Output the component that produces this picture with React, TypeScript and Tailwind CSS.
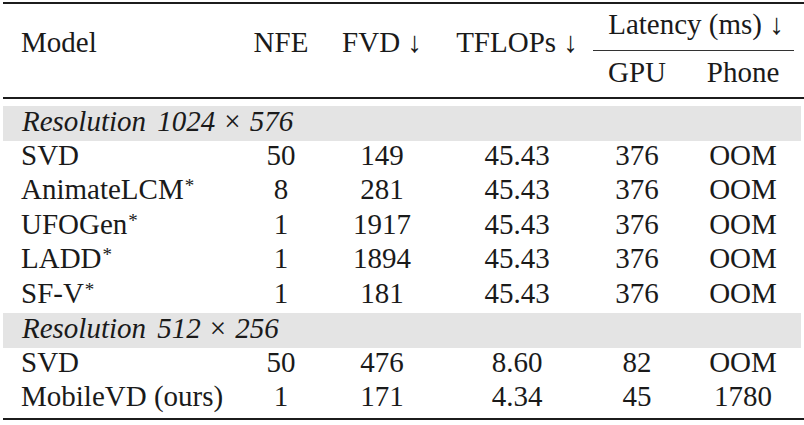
import React from "react";

const cols = "grid grid-cols-[247px_62px_140px_130px_110px_102px]";

function Star() {
  return <span className="inline-block align-top mt-[1px] ml-[1px] text-[19px] leading-[19px]">*</span>;
}

type Row = { name: React.ReactNode; nfe: string; fvd: string; tf: string; gpu: string; phone: string };

const rows1: Row[] = [
  { name: "SVD", nfe: "50", fvd: "149", tf: "45.43", gpu: "376", phone: "OOM" },
  { name: <>AnimateLCM<Star /></>, nfe: "8", fvd: "281", tf: "45.43", gpu: "376", phone: "OOM" },
  { name: <>UFOGen<Star /></>, nfe: "1", fvd: "1917", tf: "45.43", gpu: "376", phone: "OOM" },
  { name: <>LADD<Star /></>, nfe: "1", fvd: "1894", tf: "45.43", gpu: "376", phone: "OOM" },
  { name: <>SF-V<Star /></>, nfe: "1", fvd: "181", tf: "45.43", gpu: "376", phone: "OOM" },
];

const rows2: Row[] = [
  { name: "SVD", nfe: "50", fvd: "476", tf: "8.60", gpu: "82", phone: "OOM" },
  { name: "MobileVD (ours)", nfe: "1", fvd: "171", tf: "4.34", gpu: "45", phone: "1780" },
];

function DataRow({ r }: { r: Row }) {
  return (
    <div className={`${cols} h-[34.4px] leading-[28.5px]`}>
      <div className="pl-[18px] whitespace-nowrap">{r.name}</div>
      <div className="text-center">{r.nfe}</div>
      <div className="text-center">{r.fvd}</div>
      <div className="text-center">{r.tf}</div>
      <div className="text-center">{r.gpu}</div>
      <div className="text-center">{r.phone}</div>
    </div>
  );
}

function Band({ a, b }: { a: string; b: string }) {
  return (
    <div className="h-[35px] mr-[3px] bg-[#e4e4e4] leading-[30px] pl-[19px] italic whitespace-nowrap">
      Resolution <span className="ml-[4px]">{a}</span>
      <span className="not-italic mx-[9px]">×</span>
      {b}
    </div>
  );
}

export default function App() {
  return (
    <div className="w-[804px] h-[425px] bg-white text-[#1a1a1a] text-[29px] overflow-hidden font-['Liberation_Serif','Tinos','Times_New_Roman','DejaVu_Serif',serif]">
      <div className="pt-[2px] pl-[3px]">
        <div className="border-t-2 border-[#1c1c1c]" />
        <div className={`${cols} h-[93px]`}>
          <div className="pl-[18px] pt-[23px] leading-[31px]">Model</div>
          <div className="text-center pt-[23px] leading-[31px]">NFE</div>
          <div className="text-center pt-[23px] leading-[31px]">FVD ↓</div>
          <div className="text-center pt-[23px] leading-[31px]">TFLOPs ↓</div>
          <div className="col-span-2 flex flex-col">
            <div className="text-center pt-[5px] leading-[31px] pl-[16px]">Latency (ms) ↓</div>
            <div className="mt-[10px] ml-[11px] border-t border-[#333]" />
            <div className="grid grid-cols-[110px_102px] pt-[6px] leading-[31px]">
              <div className="text-center">GPU</div>
              <div className="text-center">Phone</div>
            </div>
          </div>
        </div>
        <div className="border-t-2 border-[#1c1c1c]" />
        <div className="h-[7px]" />
        <Band a="1024" b="576" />
        {rows1.map((r, i) => (
          <DataRow key={i} r={r} />
        ))}
        <Band a="512" b="256" />
        {rows2.map((r, i) => (
          <DataRow key={i} r={r} />
        ))}
        <div className="h-[1px]" />
        <div className="border-t-2 border-[#1c1c1c]" />
      </div>
    </div>
  );
}
